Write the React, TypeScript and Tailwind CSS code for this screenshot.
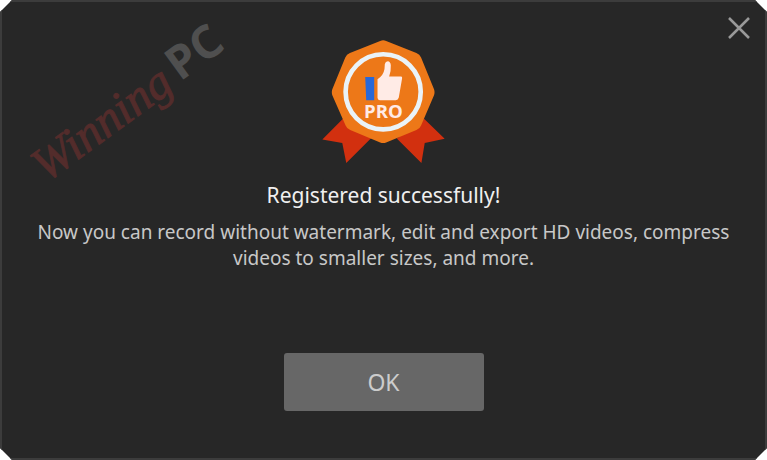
function Watermark() {
  return (
    <svg
      className="pointer-events-none absolute left-0 top-0"
      width="260"
      height="220"
      viewBox="0 0 260 220"
      aria-hidden="true"
    >
      <text
        transform="translate(44 181) rotate(-36)"
        className="fill-[#532c2b] stroke-[#532c2b] stroke-1 font-['Liberation_Serif',serif] text-[48px] italic"
      >
        Winning
      </text>
      <text
        transform="translate(178 80) rotate(-36)"
        className="fill-[#4f4f4f] font-['Open_Sans',sans-serif] text-[46px] font-bold"
      >
        PC
      </text>
    </svg>
  );
}

function ProBadge() {
  return (
    <svg width="123" height="123" viewBox="36 28 368 370" role="img" aria-label="Pro badge">
      {/* Ribbons */}
      <path d="M98 265 36 327l60 11 12 60 76-76z" fill="#d2300f" />
      <path d="M342 265l62 60-60 13-10 60-74-74z" fill="#d2300f" />

      {/* Medal */}
      <path
        d="M210 31q9-4 18 0l91 36q10 4 14 14l39 95q3 9 0 18l-39 91q-4 10-14 14l-91 37q-9 4-18 0l-90-37q-10-4-14-14l-40-91q-3-9 0-18l39-95q4-10 14-14z"
        fill="#ed7818"
      />
      <circle cx="219" cy="184" r="113" fill="none" stroke="#eaf3f8" strokeWidth="14" />

      {/* Thumb */}
      <path d="M165 139h27v70h-24z" fill="#2868d8" />
      <path
        d="M202 146q18-12 21-31l1-15q2-8 9-8 8 1 9 12 1 16-5 34h36q4 0 3 5l-10 58q-2 8-9 8h-48q-7 0-7-7z"
        fill="#ffebe6"
      />
      <text
        x="220"
        y="264"
        textAnchor="middle"
        className="fill-[#ffebe6] font-['Open_Sans',sans-serif] text-[56px] font-bold"
      >
        PRO
      </text>
    </svg>
  );
}

export default function App() {
  return (
    <main className="min-h-screen bg-white font-['Noto_Sans',sans-serif]">
      <section
        role="dialog"
        aria-labelledby="dialog-title"
        className="relative flex min-h-screen flex-col items-center border-2 border-[#3c3c3c] bg-[#272727] px-6 pb-[47px] pt-[38px] text-center [clip-path:polygon(12px_0,calc(100%-12px)_0,100%_12px,100%_calc(100%-12px),calc(100%-12px)_100%,12px_100%,0_calc(100%-12px),0_12px)]"
      >
        <Watermark />
        <button
          type="button"
          aria-label="Close"
          className="absolute right-3 top-3 flex size-7 items-center justify-center text-[#999999]"
        >
          <svg width="22" height="22" viewBox="0 0 22 22" fill="none" stroke="currentColor" strokeWidth="2.5">
            <path d="M1 1l20 20M21 1 1 21" />
          </svg>
        </button>

        <ProBadge />

        <h1 id="dialog-title" className="mt-4 text-[21px] leading-8 text-[#f0f0f0]">
          Registered successfully!
        </h1>
        <p className="mt-2 max-w-[704px] text-[19px] leading-[26px] text-[#c8c8c8]">
          Now you can record without watermark, edit and export HD videos, compress videos to smaller
          sizes, and more.
        </p>

        <button
          type="button"
          className="mt-auto h-[58px] w-[200px] rounded-[3px] bg-[#676767] text-[23px] text-[#cccccc]"
        >
          OK
        </button>
      </section>
    </main>
  );
}
